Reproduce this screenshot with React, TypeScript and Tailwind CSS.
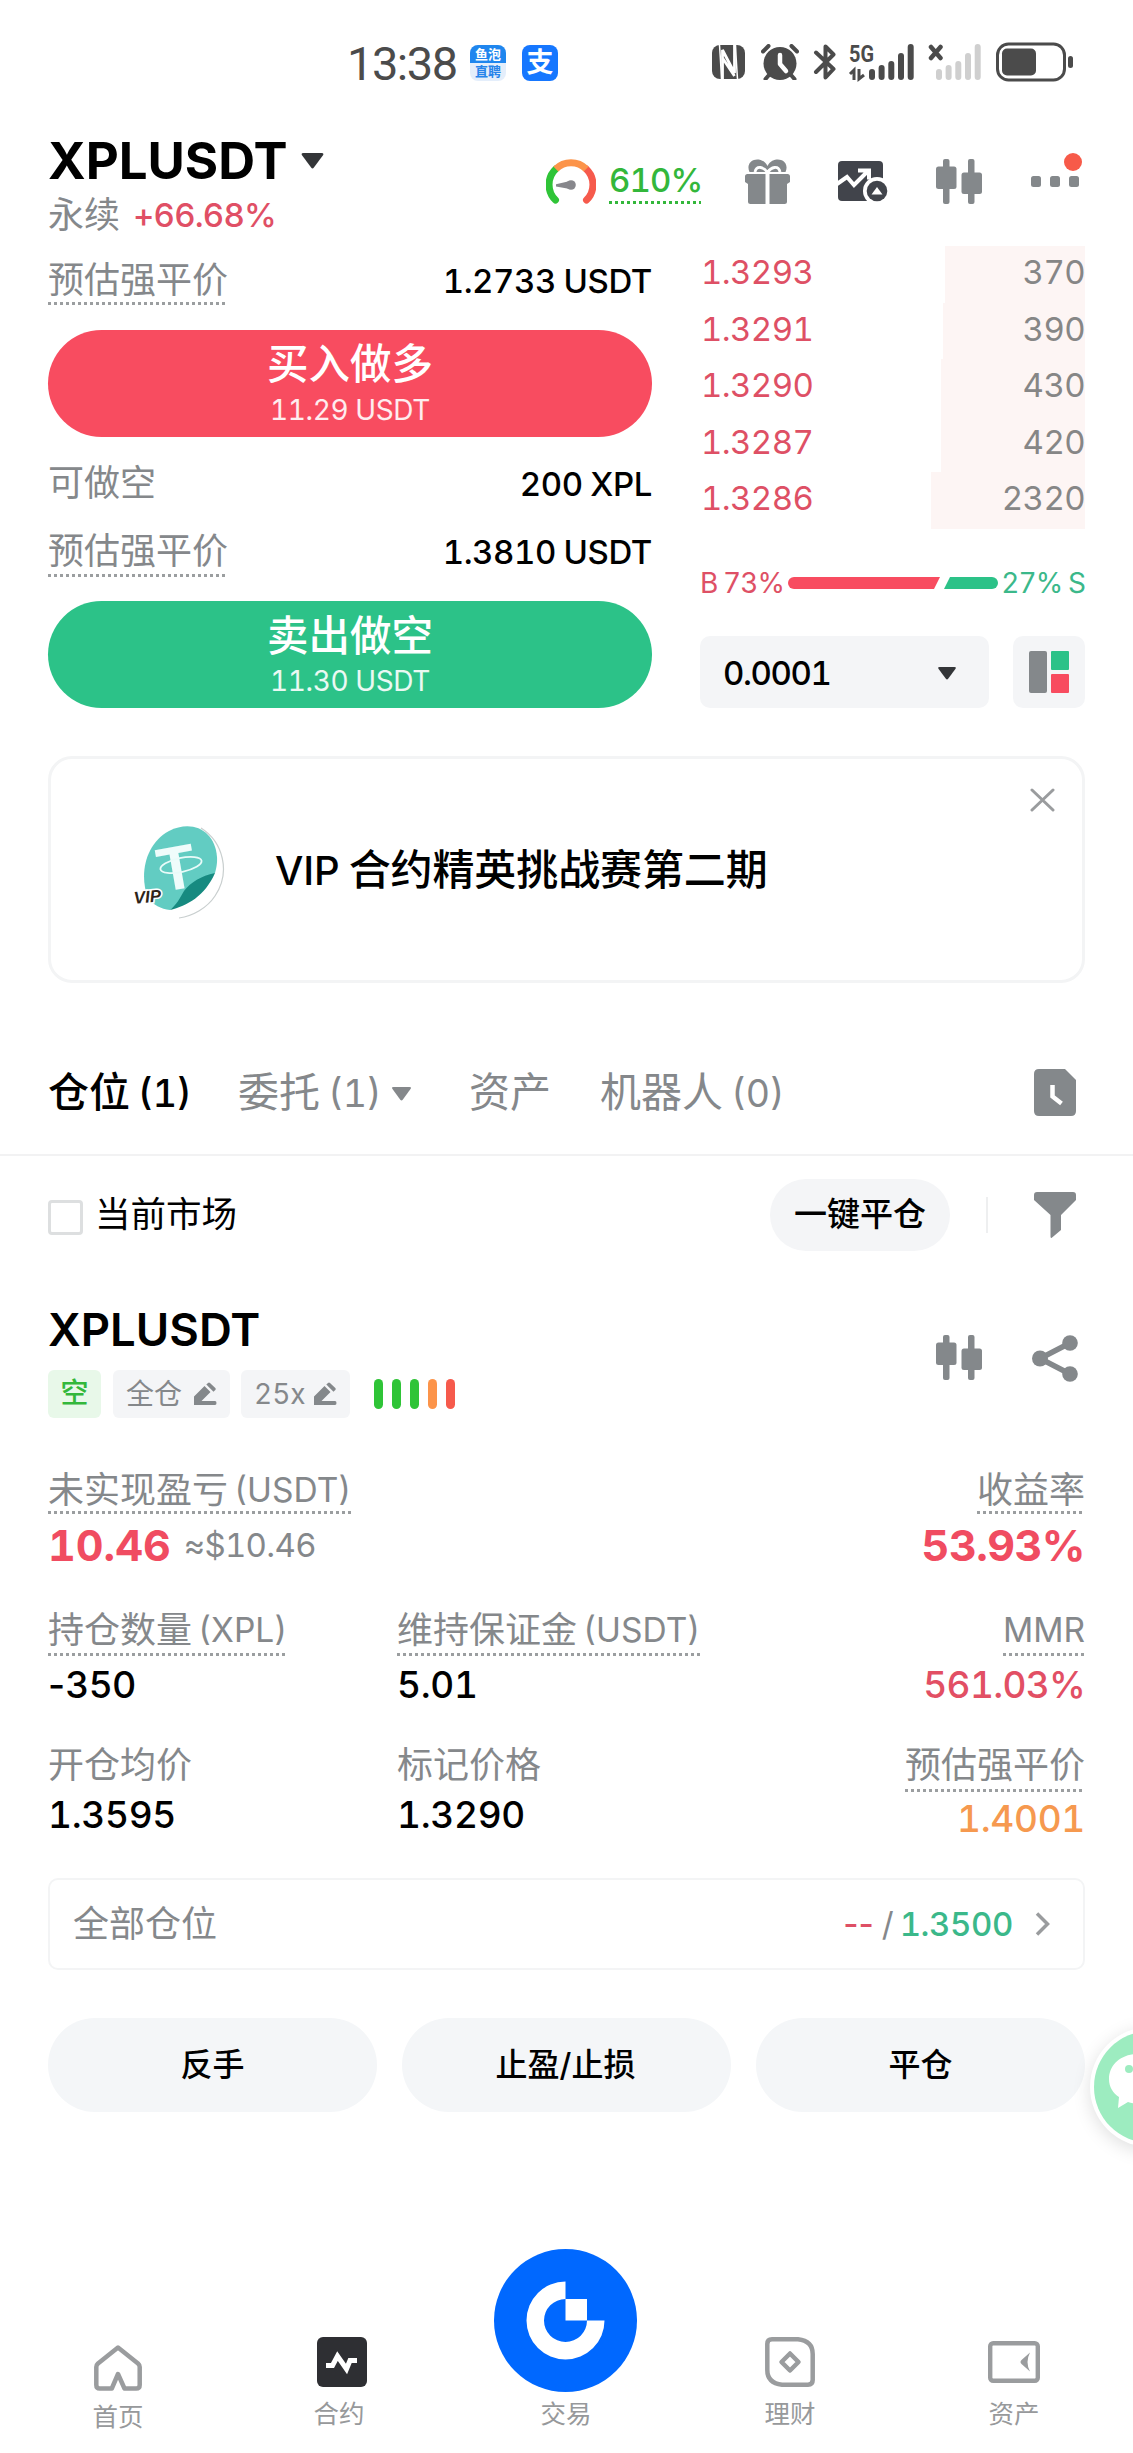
import React from 'react';

interface DottedLabelProps {
  text: string;
  unit?: string;
  gap?: string;
  className?: string;
}

const DottedLabel: React.FC<DottedLabelProps> = ({ text, unit, gap = 'mt-[3px]', className = '' }) => (
  <div className={`flex flex-col w-fit text-[36px] leading-[40px] tracking-normal text-[#85888b] ${className}`}>
    <div className="h-10 flex items-center whitespace-nowrap">
      <span>{text}</span>
      {unit && <span className={`text-[33.500px] ${text ? 'ml-[6px]' : ''}`}>{unit}</span>}
    </div>
    <div className={`h-[3px] bg-[repeating-linear-gradient(90deg,#9b9ea0_0_3px,transparent_3px_6px)] ${gap}`}></div>
  </div>
);

const Caret = ({ className = '' }) => (
  <svg viewBox="0 0 22 16" className={className} fill="currentColor">
    <path d="M2 0h18q3 0 1.3 2.4L12.4 14.6q-1.4 1.8-2.8 0L.7 2.4Q-1 0 2 0z" />
  </svg>
);

const Candles = () => (
  <svg width="46" height="45" viewBox="0 0 46 45" fill="#84888b">
    <rect x="7" y="0" width="6.5" height="45" rx="2" />
    <rect x="0" y="7.5" width="20.500" height="22.500" rx="2.500" />
    <rect x="32" y="0" width="6.5" height="45" rx="2" />
    <rect x="25.500" y="13.500" width="20.500" height="21.500" rx="2.500" />
  </svg>
);

const Pencil = () => (
  <svg width="24" height="24" viewBox="0 0 24 24" fill="#84888b">
    <path d="M1 23v-8.500L11.500 4l6 6L8.500 19H22q1.500 0 1.500 2t-1.500 2z" />
    <path d="M13.300 2.500 15 .9q1-.9 2 0L22.300 6q1 1 0 2L20.500 9.700z" />
  </svg>
);

const Signal = ({ color }: { color: string }) => (
  <g fill={color}>
    <rect x="20" y="25" width="6" height="11" rx="3" />
    <rect x="29.600" y="21" width="6" height="15" rx="3" />
    <rect x="39.300" y="17" width="6" height="19" rx="3" />
    <rect x="49" y="9" width="6" height="27" rx="3" />
    <rect x="58.700" y="0" width="6" height="36" rx="3" />
  </g>
);

const StatusBar = () => (
  <div className="h-[110px] flex items-start pt-[42px] pl-[347px]">
    <span className="w-[123px] font-['Roboto'] text-[47px] leading-[44px] tracking-[-1.5px] text-[#4b4b4b]">13:38</span>
    <div className="mt-[3px] w-9 h-9 rounded-[8px] overflow-hidden bg-[#e4eefb] text-center text-[13px] font-bold">
      <div className="h-[18px] leading-[19px] bg-[#1f86ee] text-white">鱼泡</div>
      <div className="h-[18px] leading-[17px] text-[#2784ea]">直聘</div>
    </div>
    <div className="mt-[3px] ml-4 w-9 h-9 rounded-[8px] bg-[#1677ff] text-center text-white text-[27px] leading-[35px] font-bold">支</div>

    <svg className="ml-[154px] mt-[3px]" width="33" height="34" viewBox="0 0 33 34">
      <rect width="33" height="34" rx="8" fill="#4b4b4b" />
      <path d="M10.500 34V5l12 23V0M10.500 13l12 18" fill="none" stroke="#fff" strokeWidth="2.800" />
      <path d="M7.500 0q1 14 2 34M25.500 34q-1-14-2-34" fill="none" stroke="#fff" strokeWidth="1.500" />
    </svg>
    <svg className="ml-4 mt-[2px]" width="38" height="36" viewBox="0 0 38 36" fill="none" stroke="#4b4b4b" strokeLinecap="round">
      <circle cx="19" cy="19.500" r="16.500" fill="#4b4b4b" stroke="none" />
      <path d="M2 7.500 7.500 2M36 7.500 30.500 2M8 31l-3.500 4M30 31l3.500 4" strokeWidth="4" />
      <path d="M19 11v9l6 7" stroke="#fff" strokeWidth="4.500" strokeLinejoin="round" />
    </svg>
    <svg className="ml-[14px] mt-[2px]" width="24" height="36" viewBox="0 0 24 36" fill="none" stroke="#4b4b4b" strokeWidth="4" strokeLinecap="round" strokeLinejoin="round">
      <path d="M3 8.500 20.500 25l-8 8.500V2.500l8 8L3 28" />
    </svg>
    <svg className="ml-[12px] mt-[2px] overflow-visible" width="66" height="36" viewBox="0 0 66 36">
      <text x="0" y="18" fill="#4b4b4b" fontFamily="Roboto" fontWeight="700" fontSize="24" textLength="25" lengthAdjust="spacingAndGlyphs">5G</text>
      <path d="M1 30 5 26v10M10 25v10l5-4" fill="none" stroke="#4b4b4b" strokeWidth="3" />
      <Signal color="#4b4b4b" />
    </svg>
    <svg className="ml-[1px] mt-[2px]" width="66" height="36" viewBox="0 0 66 36">
      <path d="m15 3 9.500 11M24.500 3 15 14" stroke="#4b4b4b" strokeWidth="4.500" strokeLinecap="round" />
      <Signal color="#cfcfcf" />
    </svg>
    <svg className="ml-[14px]" width="78" height="40" viewBox="0 0 78 40">
      <rect x="1.500" y="2" width="67" height="36" rx="11" fill="none" stroke="#4b4b4b" strokeWidth="3" />
      <rect x="6" y="6.500" width="34" height="27" rx="5" fill="#4b4b4b" />
      <rect x="72" y="14" width="5" height="12" rx="2.500" fill="#4b4b4b" />
    </svg>
  </div>
);

const Header = () => (
  <div className="h-[136px] px-12 flex justify-between">
    <div className="pt-[21px]">
      <div className="flex items-center text-[51px] leading-[60px] font-bold">
        <span className="w-[253px]">XPLUSDT</span>
        <Caret className="w-[23px] h-4 text-[#333538]" />
      </div>
      <div className="mt-1 flex items-center text-[36px] leading-[40px] text-[#85888b]">
        <span>永续</span>
        <span className="ml-[13px] text-[33px] tracking-[-0.800px] font-medium text-[#e04f65]">+66.68%</span>
      </div>
    </div>
    <div className="flex items-start pt-[49px]">
      <svg width="50" height="45" viewBox="0 0 50 45" fill="none" strokeWidth="7">
        <path d="M9.500 41A21.500 21.500 0 0 1 9.800 10" stroke="#2fc437" strokeLinecap="round" />
        <path d="M40.500 41A21.500 21.500 0 0 0 40.200 10" stroke="#f65a4c" strokeLinecap="round" />
        <path d="M9.800 10a21.500 21.500 0 0 1 30.400 0" stroke="#fc944a" />
        <path d="M10 25.300 24 22v8L10 27.500z" fill="#87878c" stroke="none" />
        <circle cx="25" cy="26" r="4.800" fill="#87878c" stroke="none" />
      </svg>
      <div className="ml-[13px] w-[92px]">
        <div className="mt-[5px] text-[33px] leading-[32px] tracking-[-0.900px] font-medium text-[#33b73b]">610%</div>
        <div className="mt-[5px] h-[3px] bg-[repeating-linear-gradient(90deg,#33b73b_0_3px,transparent_3px_6px)]"></div>
      </div>
      <svg className="ml-[44px]" width="45" height="45" viewBox="0 0 45 45" fill="#84888b">
        <path d="M22.500 7C19 0 12 0 9 1 3 3 2.500 9 4.500 13h36C42.500 9 42 3 36 1c-3-1-10-1-13.500 6z" />
        <path d="M10 13q1-5 5.500-4.500 4 .5 7 5 3-4.500 7-5Q34 8 35 13" fill="none" stroke="#fff" strokeWidth="2.800" />
        <path d="M2.500 15h18v30H5.500Q3 45 3 42.500V25L0 23v-5.500Q0 15 2.500 15zM24.500 15h18q2.500 0 2.500 2.500V23l-3 2v17.500q0 2.500-2.500 2.500h-15z" />
      </svg>
      <svg className="ml-[48px] mt-[2px]" width="50" height="41" viewBox="0 0 50 41">
        <rect width="45" height="40" rx="4" fill="#41444b" />
        <path d="m-1 23 10-7 7 8L29 11M20 9.500h11v9" fill="none" stroke="#fff" strokeWidth="4" />
        <circle cx="39" cy="30" r="14" fill="#fff" />
        <circle cx="39" cy="30" r="10.300" fill="#41444b" />
        <path d="m39 26 5.500 7.500h-11z" fill="#fff" />
      </svg>
      <div className="ml-[48px]"><Candles /></div>
      <svg className="ml-[49px] -mt-[7px]" width="54" height="52" viewBox="0 0 54 52" fill="#84888b">
        <rect x="0" y="24" width="10" height="11" rx="2.500" />
        <rect x="19" y="24" width="10" height="11" rx="2.500" />
        <rect x="38" y="24" width="10" height="11" rx="2.500" />
        <circle cx="42" cy="10" r="9" fill="#f75a49" />
      </svg>
    </div>
  </div>
);

const asks = [
  { price: '1.3293', amount: '370', depth: 140 },
  { price: '1.3291', amount: '390', depth: 142 },
  { price: '1.3290', amount: '430', depth: 144 },
  { price: '1.3287', amount: '420', depth: 144 },
  { price: '1.3286', amount: '2320', depth: 154 },
];

const OrderForm = () => (
  <div className="w-[604px] pt-[14px] text-[33px] font-medium tracking-[-0.400px] [word-spacing:-1px]">
    <div className="flex justify-between">
      <DottedLabel text="预估强平价" gap="mt-[2px]" className="font-normal" />
      <span className="leading-[42px]">1.2733 USDT</span>
    </div>
    <button className="mt-[25px] w-full h-[107px] rounded-full bg-[#f84c60] text-white flex flex-col items-center pt-[10px]">
      <span className="text-[41.500px] leading-[48px] tracking-normal">买入做多</span>
      <span className="mt-[7px] text-[28px] leading-[30px] font-normal text-white/90">11.29 USDT</span>
    </button>
    <div className="mt-[27px] flex justify-between leading-[40px]">
      <span className="text-[36px] leading-[38px] tracking-normal font-normal text-[#85888b]">可做空</span>
      <span>200 XPL</span>
    </div>
    <div className="mt-[27px] flex justify-between">
      <DottedLabel text="预估强平价" className="font-normal" />
      <span className="leading-[42px]">1.3810 USDT</span>
    </div>
    <button className="mt-6 w-full h-[107px] rounded-full bg-[#2cc288] text-white flex flex-col items-center pt-[11px]">
      <span className="text-[41.500px] leading-[48px] tracking-normal">卖出做空</span>
      <span className="mt-[6px] text-[28px] leading-[30px] font-normal text-white/90">11.30 USDT</span>
    </button>
  </div>
);

const OrderBook = () => (
  <div className="w-[385px]">
    {asks.map((row) => (
      <div key={row.price} className="h-[56.600px] flex justify-between items-stretch text-[33px] leading-[53px] tracking-[-0.600px]">
        <span className="pl-[1px] text-[#de5065]">{row.price}</span>
        <span className="bg-[#fdf5f4] text-right text-[#868686]" style={{ width: row.depth }}>{row.amount}</span>
      </div>
    ))}
    <div className="mt-[36px] h-9 flex items-center text-[28px] tracking-[-0.900px] [word-spacing:-1px]">
      <span className="w-[88px] text-[#de5065]">B 73%</span>
      <svg width="210" height="12" viewBox="0 0 210 12">
        <path d="M6 0h146l-6 12H6A6 6 0 0 1 6 0z" fill="#f84c60" />
        <path d="M162 0h42a6 6 0 0 1 0 12h-48z" fill="#2cc288" />
      </svg>
      <span className="ml-auto text-[#3bb88a]">27% S</span>
    </div>
    <div className="mt-[35px] flex justify-between">
      <div className="w-[289px] h-[72px] rounded-[10px] bg-[#f4f5f7] flex items-center justify-between pl-[23px] pr-[33px] text-[33px] leading-[40px] tracking-[-1.400px] font-medium">
        <span className="mt-[2px]">0.0001</span>
        <Caret className="w-[18px] h-[13px] mt-[3px] text-[#333538]" />
      </div>
      <div className="w-[72px] h-[72px] rounded-[10px] bg-[#f4f5f7] flex items-center justify-center gap-1">
        <div className="w-[18.500px] h-[42px] rounded-[2px] bg-[#84888b]"></div>
        <div className="flex flex-col gap-1">
          <div className="w-[18px] h-[19px] rounded-[1px] bg-[#2cc288]"></div>
          <div className="w-[18px] h-[19px] rounded-[1px] bg-[#f84c60]"></div>
        </div>
      </div>
    </div>
  </div>
);

const Banner = () => (
  <div className="mx-12 mt-12 h-[227px] rounded-[24px] border-[3px] border-[#f3f4f5] flex items-center pl-[72px]">
    <svg width="104" height="100" viewBox="0 0 104 100">
      <circle cx="54" cy="49" r="46" fill="#fff" />
      <path d="M78 8c22 14 30 44 14 68-8 12-22 20-36 22" fill="none" stroke="#c9cfcf" strokeWidth="1.200" />
      <path d="M25 78C16 55 22 24 46 11c24-12 46 0 48 26 .4 6-.5 10-2 16L47 90c-9-1-17-5-22-12z" fill="#62ccc2" />
      <path d="M92 53C82 76 64 86 47 90c7-6 10-12 14-19 7-9 17-15 31-18z" fill="#168a80" />
      <text x="35" y="69" fill="#effcfb" fontFamily="Liberation Sans" fontWeight="700" fontSize="62" transform="rotate(-10 56 50)">T</text>
      <ellipse cx="58" cy="45" rx="21" ry="7" fill="none" stroke="#e9fbf9" strokeWidth="1.800" transform="rotate(-12 58 45)" />
      <text x="11" y="83" fill="#2e2418" stroke="#fff" strokeWidth="3" paintOrder="stroke" fontFamily="Liberation Sans" fontStyle="italic" fontWeight="700" fontSize="17" transform="rotate(-5 20 80)">VIP</text>
    </svg>
    <span className="ml-12 text-[42px] font-medium tracking-[-0.100px] whitespace-nowrap"><span className="text-[40px] mr-[9px]">VIP</span>合约精英挑战赛第二期</span>
    <svg className="ml-auto mr-[27px] mt-[29px] self-start" width="25" height="24" viewBox="0 0 25 24" stroke="#9a9c9e" strokeWidth="3" strokeLinecap="round">
      <path d="m2 2 21 20M23 2 2 22" />
    </svg>
  </div>
);

const Tabs = () => (
  <div className="mt-[79px] h-[94px] pl-12 pr-[57px] border-b-2 border-[#f2f2f3] flex items-start text-[41px] leading-[60px] text-[#85888b] whitespace-nowrap">
    <span className="w-[190px] font-medium text-black">仓位<span className="ml-2 text-[37.500px]">(1)</span></span>
    <span className="w-[153px]">委托<span className="ml-2 text-[37.500px]">(1)</span></span>
    <Caret className="w-[21px] h-[14px] mt-[25px]" />
    <span className="ml-[57px] w-[131px]">资产</span>
    <span>机器人<span className="ml-2 text-[37.500px]">(0)</span></span>
    <svg className="ml-auto mt-[7px]" width="42" height="47" viewBox="0 0 42 47" fill="#84888b">
      <path d="M5 0h26l11 11v31q0 5-5 5H5q-5 0-5-5V5q0-5 5-5z" />
      <path d="M18.500 16v11.500l9 7" fill="none" stroke="#fff" strokeWidth="4.500" />
    </svg>
  </div>
);

const FilterRow = () => (
  <div className="mt-[23px] h-[72px] pl-12 pr-[57px] flex items-center">
    <div className="mt-[5px] w-[35px] h-[35px] rounded-[4px] border-[3px] border-[#dddfe0]"></div>
    <span className="ml-3 text-[35.500px]">当前市场</span>
    <button className="ml-auto w-[180px] h-[72px] rounded-full bg-[#f4f5f7] text-[33px] font-medium">一键平仓</button>
    <div className="ml-[36px] w-[2px] h-9 bg-[#eeeff0]"></div>
    <svg className="ml-[46px]" width="42" height="46" viewBox="0 0 42 46" fill="#84888b">
      <path d="M3 0h36q3 0 3 3v5L27 23v15l-9.500 8q-1 0-1-1.500V23L0 8V3q0-3 3-3z" />
    </svg>
  </div>
);

const levels = ['bg-[#2fc437]', 'bg-[#2fc437]', 'bg-[#2fc437]', 'bg-[#fc944a]', 'bg-[#f65a4c]'];

const Position = () => (
  <div className="mt-[54px] px-12">
    <div className="flex justify-between">
      <div>
        <div className="text-[45.500px] leading-[50px] font-semibold">XPLUSDT</div>
        <div className="mt-[15px] flex h-12 text-[28px] leading-[46px] text-[#85888b]">
          <span className="w-[53px] rounded-[6px] bg-[#e8f8e9] text-center font-medium text-[#33b73b]">空</span>
          <span className="ml-3 w-[117px] rounded-[6px] bg-[#f4f5f7] flex items-center justify-between px-[13px]">全仓 <Pencil /></span>
          <span className="ml-[11px] w-[109px] rounded-[6px] bg-[#f4f5f7] flex items-center justify-between px-[13px]">25x <Pencil /></span>
          <div className="ml-6 flex items-center gap-[9px]">
            {levels.map((color, i) => (
              <div key={i} className={`w-[9px] h-[30px] rounded-full ${color}`}></div>
            ))}
          </div>
        </div>
      </div>
      <div className="flex mt-[30px] mr-[7px]">
        <Candles />
        <svg className="ml-[50px]" width="46" height="47" viewBox="0 0 46 47" fill="#84888b">
          <path d="M38 8 8 23.500 38 39" fill="none" stroke="#84888b" strokeWidth="5.500" />
          <circle cx="8" cy="23.500" r="8" />
          <circle cx="38" cy="8" r="7.800" />
          <circle cx="38" cy="39" r="7.800" />
        </svg>
      </div>
    </div>

    <div className="mt-[52px] flex justify-between">
      <DottedLabel text="未实现盈亏" unit="(USDT)" gap="mt-[1px]" />
      <DottedLabel text="收益率" gap="mt-[1px]" />
    </div>
    <div className="mt-[9px] h-[44px] flex items-center text-[43px] leading-[44px] font-bold text-[#f04c61]">
      <span>10.46</span>
      <span className="ml-[13px] text-[33px] tracking-[-0.700px] font-normal text-[#85888b]">≈$10.46</span>
      <span className="ml-auto tracking-[-0.500px]">53.93%</span>
    </div>

    <div className="mt-[43px] grid grid-cols-[349px_349px_1fr] text-[37px] leading-[44px] font-medium tracking-[-0.300px]">
      <div>
        <DottedLabel text="持仓数量" unit="(XPL)" className="font-normal" />
        <div className="mt-[7px] normal-nums tracking-[0.500px]">-350</div>
      </div>
      <div>
        <DottedLabel text="维持保证金" unit="(USDT)" className="font-normal" />
        <div className="mt-[7px]">5.01</div>
      </div>
      <div className="flex flex-col items-end">
        <DottedLabel text="" unit="MMR" className="font-normal" />
        <div className="mt-[7px] tracking-[-0.700px] text-[#e24f64]">561.03%</div>
      </div>
    </div>

    <div className="mt-[38px] h-[92px] grid grid-cols-[349px_349px_1fr] text-[37px] leading-[44px] font-medium tracking-[-0.300px]">
      <div>
        <div className="text-[36px] leading-[40px] tracking-normal font-normal text-[#85888b]">开仓均价</div>
        <div className="mt-2">1.3595</div>
      </div>
      <div>
        <div className="text-[36px] leading-[40px] tracking-normal font-normal text-[#85888b]">标记价格</div>
        <div className="mt-2">1.3290</div>
      </div>
      <div className="flex flex-col items-end">
        <DottedLabel text="预估强平价" gap="mt-1" className="font-normal" />
        <div className="mt-[5px] text-[#f6994f]">1.4001</div>
      </div>
    </div>

    <div className="mt-[41px] h-[92px] rounded-[10px] border-2 border-[#f3f4f5] flex items-center pl-[23px] pr-[33px] text-[36px] text-[#85888b]">
      <span>全部仓位</span>
      <div className="ml-auto mt-[2px] flex items-center text-[33px]">
        <span className="normal-nums font-medium text-[#de5065]">--</span>
        <span className="ml-[8px] mr-[6px]">/</span>
        <span className="tracking-[-0.400px] font-medium text-[#3bb88a]">1.3500</span>
      </div>
      <svg className="ml-[22px]" width="15" height="24" viewBox="0 0 15 24" fill="none" stroke="#9a9c9e" strokeWidth="3.500">
        <path d="m2 1.500 10.500 10.500L2 22.500" />
      </svg>
    </div>

    <div className="mt-12 grid grid-cols-3 gap-[25px] text-[32px] font-medium">
      <button className="h-[94px] rounded-full bg-[#f4f6f8]">反手</button>
      <button className="h-[94px] rounded-full bg-[#f4f6f8] pr-[2px]">止盈/止损</button>
      <button className="h-[94px] rounded-full bg-[#f4f6f8]">平仓</button>
    </div>
  </div>
);

const NavItem = ({ label, className = '', children }: { label: string; className?: string; children: React.ReactNode }) => (
  <div className="w-[224px] flex flex-col items-center justify-end">
    {children}
    <span className={`text-[25.500px] leading-[30px] text-[#97999b] ${className}`}>{label}</span>
  </div>
);

const BottomNav = () => (
  <div className="mt-[137px] h-[180px] flex pl-[6px]">
    <NavItem label="首页" className="-mb-[3px]">
      <svg className="mb-[11px]" width="48" height="46" viewBox="0 0 48 46" fill="none" stroke="#9a9c9e" strokeWidth="4.500" strokeLinejoin="round">
        <path d="M24 2.500 4 18.500q-1.700 1.500-1.700 3.500v18q0 3.500 3.500 3.500h12L24 29l6.500 14.500h11.700q3.500 0 3.500-3.500V22q0-2-1.700-3.500z" />
      </svg>
    </NavItem>
    <NavItem label="合约" className="mr-[6px]">
      <svg className="mb-3" width="50" height="50" viewBox="0 0 50 50">
        <rect width="50" height="50" rx="6" fill="#2e2f33" />
        <path d="M9 28.500h6.500L20.500 19l9 13 3.500-8.500h7" fill="none" stroke="#fff" strokeWidth="5" />
      </svg>
    </NavItem>
    <NavItem label="交易">
      <svg className="mb-[7px] mr-[1px] shrink-0" width="143" height="143" viewBox="0 0 143 143">
        <circle cx="71.500" cy="71.500" r="71.500" fill="#0068ff" />
        <path d="M71.500 32.500a39 39 0 1 0 39 39H93a21.500 21.500 0 1 1-21.500-21.500z" fill="#fff" />
        <rect x="71.500" y="50" width="21.500" height="21.500" fill="#fff" />
      </svg>
    </NavItem>
    <NavItem label="理财">
      <svg className="mb-3" width="50" height="50" viewBox="0 0 50 50" fill="none" stroke="#9a9c9e" strokeWidth="4.500">
        <path d="M7 2.300h26Q47.700 4 47.700 17v26q0 4.700-4.700 4.700H17Q2.300 46 2.300 33V7q0-4.700 4.700-4.700z" />
        <path d="m25 16.500 8.500 8.500-8.500 8.500-8.500-8.500z" strokeLinejoin="round" />
      </svg>
    </NavItem>
    <NavItem label="资产">
      <svg className="mb-4" width="52" height="42" viewBox="0 0 52 42">
        <rect x="2.200" y="2.200" width="47.600" height="37.600" rx="3" fill="none" stroke="#9a9c9e" strokeWidth="4.400" />
        <path d="M42 11.500 33.500 19q-2 2 0 4l8.500 7.500q-5-9.500 0-19z" fill="#9a9c9e" />
      </svg>
    </NavItem>
  </div>
);

export default function App() {
  return (
    <div className="relative w-[1133px] h-[2453px] overflow-hidden bg-white text-black tabular-nums font-['Inter','Noto_Sans_CJK_SC',sans-serif]">
      <StatusBar />
      <Header />
      <div className="px-12 flex justify-between">
        <OrderForm />
        <OrderBook />
      </div>
      <Banner />
      <Tabs />
      <FilterRow />
      <Position />
      <BottomNav />

      {/* floating support button, half off screen */}
      <div className="absolute left-[1090px] top-[2027px] w-[120px] h-[120px] rounded-full bg-white p-1 shadow-[0_4px_18px_rgba(0,0,0,0.13)]">
        <svg width="112" height="112" viewBox="0 0 112 112">
          <circle cx="56" cy="56" r="56" fill="#9decc0" />
          <path d="M44 23c-17 0-29 11-29 25 0 8 4 14 10 18l-1 11 10-6q5 1.500 10 1.500c17 0 29-10 29-24.500S61 23 44 23z" fill="#fff" />
          <circle cx="35" cy="38" r="4" fill="#9decc0" />
          <circle cx="54" cy="38" r="4" fill="#9decc0" />
        </svg>
      </div>
    </div>
  );
}
